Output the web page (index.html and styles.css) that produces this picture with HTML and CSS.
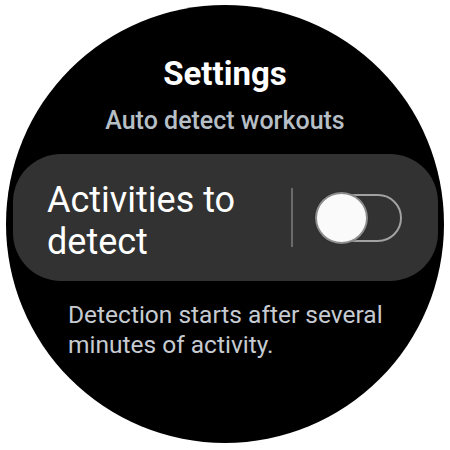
FILE: index.html
```html
<!DOCTYPE html>
<html lang="en">
<head>
    <meta charset="UTF-8">
    <meta name="viewport" content="width=device-width, initial-scale=1.0">
    <title>Settings - Auto detect workouts</title>
    <link rel="stylesheet" href="styles.css">
</head>
<body>
    <div class="watch">
        <h1 class="title">Settings</h1>
        <h2 class="subtitle">Auto detect workouts</h2>

        <div class="setting-card">
            <div class="setting-label">Activities to detect</div>
            <div class="divider"></div>
            <div class="switch">
                <div class="switch-track"></div>
                <div class="switch-knob"></div>
            </div>
        </div>

        <p class="note">Detection starts after several minutes of activity.</p>
    </div>
</body>
</html>
```

FILE: styles.css
```css
* {
    margin: 0;
    padding: 0;
    box-sizing: border-box;
    font-family: Roboto, 'Noto Sans', sans-serif;
}

body {
    background: #fff;
    width: 450px;
    height: 450px;
    overflow: hidden;
}

/* round watch screen */
.watch {
    width: 438px;
    height: 438px;
    margin: 5px 0 0 6px;
    border-radius: 50%;
    background: #000;
    display: flex;
    flex-direction: column;
    align-items: center;
    padding-top: 49px;
    overflow: hidden;
}

.title {
    color: #fff;
    font-size: 33px;
    font-weight: 700;
    line-height: 40px;
}

.subtitle {
    margin-top: 12px;
    color: #b6bec6;
    font-size: 25px;
    font-weight: 500;
    line-height: 30px;
}

.setting-card {
    align-self: flex-start;
    margin: 18px 0 0 7px;
    width: 425px;
    height: 127px;
    background: #323232;
    border-radius: 48px;
    display: flex;
    align-items: center;
    padding: 0 36px 0 34px;
}

.setting-label {
    flex: 1;
    padding-top: 6px;
    color: #fff;
    font-size: 36px;
    line-height: 42px;
}

.divider {
    width: 2px;
    height: 59px;
    background: #6a6a6a;
    margin-right: 22px;
}

.switch {
    position: relative;
    width: 87px;
    height: 52px;
}

.switch-track {
    margin: 2px 0 0 2px;
    width: 85px;
    height: 48px;
    border: 2px solid #a2a2a2;
    border-radius: 24px;
}

.switch-knob {
    position: absolute;
    left: 0;
    top: 0;
    width: 53px;
    height: 52px;
    border-radius: 50%;
    background: #fafafa;
    border: 2px solid #8c8c8c;
    box-shadow: 0 0 1px rgba(0,0,0,0.5);
}

.note {
    align-self: stretch;
    margin-top: 19px;
    padding: 0 36px 0 62px;
    color: #c6cbd1;
    font-size: 24.5px;
    line-height: 30px;
}
```
